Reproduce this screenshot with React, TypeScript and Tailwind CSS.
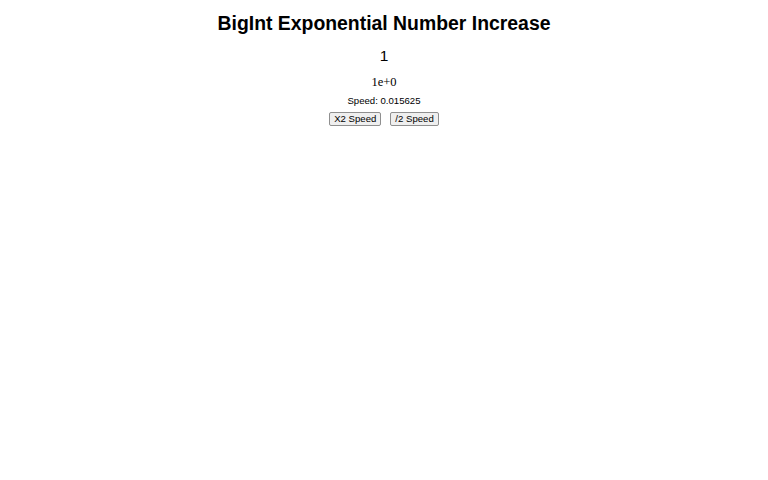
import { useState } from "react";

export default function App() {
  const [speed, setSpeed] = useState(0.015625);

  return (
    <div className="flex flex-col items-center font-['Liberation_Sans',Arial,sans-serif] text-black">
      <h1 className="mt-[11px] text-[19.4px] font-bold leading-[24px]">BigInt Exponential Number Increase</h1>
      <div className="mt-[12px] text-[15.5px] leading-[18px]">1</div>
      <div className="mt-[10px] font-['Liberation_Serif',serif] text-[12.5px] leading-[14px]">1e+0</div>
      <div className="mt-[6px] text-[9.6px] leading-[12px]">Speed: {speed}</div>
      <div className="mt-[5px] flex gap-[9px]">
        <button
          onClick={() => setSpeed(speed * 2)}
          className="h-[14px] rounded-[2px] border border-[#8f8f8f] bg-[#efefef] px-[4px] text-[9.6px] leading-[12px]"
        >
          X2 Speed
        </button>
        <button
          onClick={() => setSpeed(speed / 2)}
          className="h-[14px] rounded-[2px] border border-[#8f8f8f] bg-[#efefef] px-[4px] text-[9.6px] leading-[12px]"
        >
          /2 Speed
        </button>
      </div>
    </div>
  );
}
